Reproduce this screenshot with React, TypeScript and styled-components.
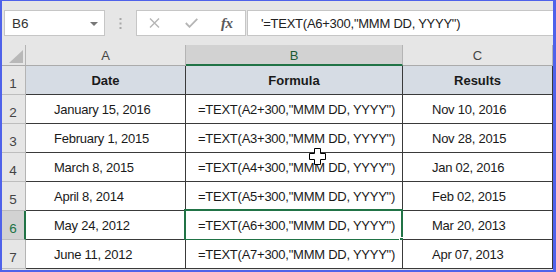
import React from "react";
import styled, { createGlobalStyle, css } from "styled-components";

const CELL_FONT = `"Liberation Sans", Arial, sans-serif`;

const Global = createGlobalStyle`
  html, body { margin: 0; padding: 0; background: #ffffff; }
  body { font-family: ${CELL_FONT}; }
  * { box-sizing: border-box; }
`;

const BLUE = "#4f62ea";
const GREEN = "#217346";

const Frame = styled.div`
  position: relative;
  width: 556px;
  height: 272px;
  background: #e6e6e6;
  border-style: solid;
  border-color: ${BLUE};
  border-width: 1px 3px 2px 2px;
  display: flex;
  flex-direction: column;
  overflow: hidden;
`;

const Toolbar = styled.div`
  height: 44px;
  flex: none;
  display: flex;
  align-items: flex-start;
  padding: 9px 0 0 2px;
`;

const BoxBase = css`
  height: 26px;
  background: #ffffff;
  border: 1px solid #c6c6c6;
  display: flex;
  align-items: center;
`;

const NameBox = styled.div`
  ${BoxBase};
  width: 101px;
  padding: 0 6px 0 7px;
  justify-content: space-between;
  font-size: 13.5px;
  color: #333;
`;

const Caret = styled.span`
  width: 0;
  height: 0;
  border-left: 4px solid transparent;
  border-right: 4px solid transparent;
  border-top: 4px solid #777;
  margin-top: 1px;
`;

const Grip = styled.div`
  width: 31px;
  height: 26px;
  display: flex;
  align-items: center;
  justify-content: center;
`;

const FxBox = styled.div`
  ${BoxBase};
  width: 110px;
  margin-right: 1px;
  padding: 0 0 0 12px;
`;

const IconSlot = styled.span<{ $w: number }>`
  width: ${(p) => p.$w}px;
  display: flex;
  align-items: center;
`;

const Fx = styled.span`
  font-family: "Liberation Serif", "Times New Roman", serif;
  font-style: italic;
  font-weight: bold;
  font-size: 15px;
  color: #5a5a5a;
  letter-spacing: -0.5px;
`;

const FormulaInput = styled.div`
  ${BoxBase};
  flex: 1;
  border-right: none;
  padding-left: 13px;
  font-size: 13px;
  letter-spacing: -0.25px;
  color: #222;
  white-space: nowrap;
`;

const Sheet = styled.div`
  display: grid;
  grid-template-columns: 24px 160px 217px 150px;
  grid-template-rows: 21px repeat(7, 29px);
`;

const Corner = styled.div`
  background: #e6e6e6;
  border-right: 1px solid #b4b4b4;
  border-bottom: 1px solid #ababab;
  display: flex;
  align-items: flex-end;
  justify-content: flex-end;
  padding: 0 2px 2px 0;
`;

const ColHead = styled.div<{ $active?: boolean }>`
  background: ${(p) => (p.$active ? "#d2d2d2" : "#e6e6e6")};
  border-right: 1px solid #b4b4b4;
  border-bottom: ${(p) => (p.$active ? `2px solid ${GREEN}` : "1px solid #ababab")};
  display: flex;
  align-items: center;
  justify-content: center;
  font-size: 13px;
  color: ${(p) => (p.$active ? "#1d5a34" : "#444")};
  padding-top: ${(p) => (p.$active ? "1px" : "0")};
`;

const RowHead = styled.div<{ $active?: boolean }>`
  background: ${(p) => (p.$active ? "#d2d2d2" : "#e6e6e6")};
  border-right: ${(p) => (p.$active ? `2px solid ${GREEN}` : "1px solid #b4b4b4")};
  border-bottom: 1px solid #bdbdbd;
  display: flex;
  align-items: flex-end;
  justify-content: center;
  padding: 0 ${(p) => (p.$active ? "0" : "1px")} 3px 0;
  font-size: 13.5px;
  color: ${(p) => (p.$active ? GREEN : "#444")};
`;

const Cell = styled.div<{ $head?: boolean; $pad?: number }>`
  position: relative;
  background: ${(p) => (p.$head ? "#d6dce4" : "#ffffff")};
  border-right: 1px solid #3a3a3a;
  border-bottom: 1px solid #3a3a3a;
  display: flex;
  align-items: center;
  justify-content: ${(p) => (p.$head ? "center" : "flex-start")};
  padding-left: ${(p) => (p.$head ? 0 : p.$pad ?? 0)}px;
  padding-top: 1px;
  font-size: 13px;
  letter-spacing: ${(p) => (p.$head ? "0" : "-0.25px")};
  font-weight: ${(p) => (p.$head ? "bold" : "normal")};
  color: #1a1a1a;
  white-space: nowrap;
`;

const Selection = styled.span`
  position: absolute;
  left: -2px;
  top: -2px;
  right: -1px;
  bottom: -2px;
  border: 2px solid ${GREEN};
  pointer-events: none;
`;

const FillHandle = styled.span`
  position: absolute;
  right: -5px;
  bottom: -5px;
  width: 7px;
  height: 7px;
  background: ${GREEN};
  border: 1px solid #ffffff;
`;

const Cursor = styled.svg`
  position: absolute;
  left: 307px;
  top: 147px;
`;

const rows = [
  ["January 15, 2016", "=TEXT(A2+300,\"MMM DD, YYYY\")", "Nov 10, 2016"],
  ["February 1, 2015", "=TEXT(A3+300,\"MMM DD, YYYY\")", "Nov 28, 2015"],
  ["March 8, 2015", "=TEXT(A4+300,\"MMM DD, YYYY\")", "Jan 02, 2016"],
  ["April 8, 2014", "=TEXT(A5+300,\"MMM DD, YYYY\")", "Feb 02, 2015"],
  ["May 24, 2012", "=TEXT(A6+300,\"MMM DD, YYYY\")", "Mar 20, 2013"],
  ["June 11, 2012", "=TEXT(A7+300,\"MMM DD, YYYY\")", "Apr 07, 2013"],
];

export default function App() {
  return (
    <>
      <Global />
      <Frame>
        <Toolbar>
          <NameBox>
            <span>B6</span>
            <Caret />
          </NameBox>
          <Grip>
            <svg width="3" height="11" viewBox="0 0 3 11">
              <rect x="0.5" y="0" width="2" height="2" fill="#a8a8a8" />
              <rect x="0.5" y="4.5" width="2" height="2" fill="#a8a8a8" />
              <rect x="0.5" y="9" width="2" height="2" fill="#a8a8a8" />
            </svg>
          </Grip>
          <FxBox>
            <IconSlot $w={36}>
              <svg width="11" height="10" viewBox="0 0 11 10">
                <path d="M1 0.5 L10 9.5 M10 0.5 L1 9.5" stroke="#b5b5b5" strokeWidth="1.4" fill="none" />
              </svg>
            </IconSlot>
            <IconSlot $w={36}>
              <svg width="13" height="10" viewBox="0 0 13 10">
                <path d="M0.8 5 L4.5 8.8 L12.3 0.8" stroke="#b5b5b5" strokeWidth="1.8" fill="none" />
              </svg>
            </IconSlot>
            <Fx>fx</Fx>
          </FxBox>
          <FormulaInput>'=TEXT(A6+300,"MMM DD, YYYY")</FormulaInput>
        </Toolbar>
        <Sheet>
          <Corner>
            <svg width="14" height="13" viewBox="0 0 14 13">
              <polygon points="14,0 14,13 0,13" fill="#b8b8b8" />
            </svg>
          </Corner>
          <ColHead>A</ColHead>
          <ColHead $active>B</ColHead>
          <ColHead>C</ColHead>

          <RowHead>1</RowHead>
          <Cell $head>Date</Cell>
          <Cell $head>Formula</Cell>
          <Cell $head>Results</Cell>

          {rows.map((r, i) => {
            const active = i === 4;
            return (
              <React.Fragment key={i}>
                <RowHead $active={active}>{i + 2}</RowHead>
                <Cell $pad={28}>{r[0]}</Cell>
                <Cell $pad={12}>
                  {r[1]}
                  {active && (
                    <Selection>
                      <FillHandle />
                    </Selection>
                  )}
                </Cell>
                <Cell $pad={29}>{r[2]}</Cell>
              </React.Fragment>
            );
          })}
        </Sheet>
        <Cursor width="17" height="17" viewBox="0 0 17 17">
          <path
            d="M5.5 0.5 H11.5 V5.5 H16.5 V11.5 H11.5 V16.5 H5.5 V11.5 H0.5 V5.5 H5.5 Z"
            fill="#ffffff"
            stroke="#000000"
            strokeWidth="1"
          />
        </Cursor>
      </Frame>
    </>
  );
}
